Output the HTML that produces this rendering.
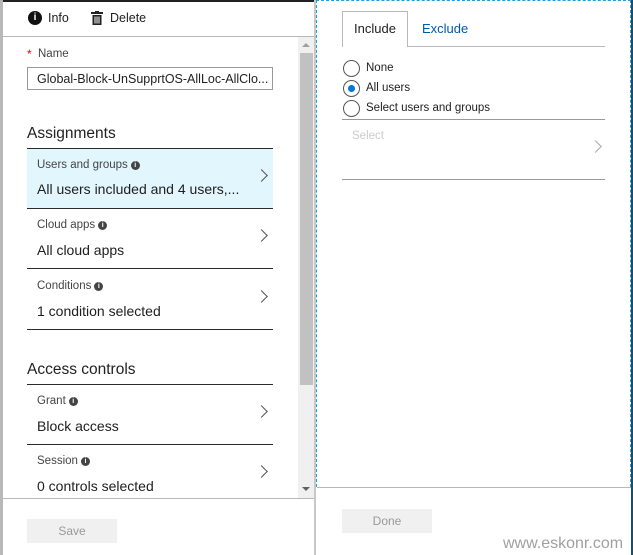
<!DOCTYPE html>
<html><head><style>
*{margin:0;padding:0;box-sizing:border-box}
body{width:633px;height:555px;position:relative;background:#fff;font-family:"Liberation Sans",sans-serif;color:#1e1e1e;overflow:hidden}
.a{position:absolute;white-space:nowrap}
.line{position:absolute;height:1px;background:#2a2a2a}
.lab{font-size:11.5px;color:#444}
.val{font-size:14px;color:#1e1e1e}
.i{display:inline-block;width:9px;height:9px;border-radius:50%;background:#444;color:#fff;font-size:7px;line-height:9px;text-align:center;font-weight:bold;vertical-align:1px;margin-left:3px}
.chev{position:absolute;width:9px;height:9px;border-right:1.3px solid #555;border-top:1.3px solid #555;transform:rotate(45deg)}
.radio{position:absolute;width:17px;height:17px;border:1.3px solid #555;border-radius:50%;background:#fff}
</style></head><body>
<div class="a" style="left:0;top:0;width:316px;height:2px;background:#222"></div>
<div class="a" style="left:0;top:0;width:3px;height:555px;background:#b8b8b8"></div>
<div class="a" style="left:3px;top:36px;width:313px;height:1px;background:#b8b8b8"></div>
<div class="a" style="left:28px;top:11px;width:14px;height:14px;border-radius:50%;background:#111;color:#fff;font-size:10px;line-height:14px;text-align:center;font-weight:bold">i</div>
<div class="a" style="left:48px;top:11px;font-size:12.5px">Info</div>
<svg class="a" style="left:91px;top:11px" width="12" height="14" viewBox="0 0 12 14"><rect x="0" y="1" width="12" height="2" fill="#222"/><rect x="4" y="0" width="4" height="1.5" fill="#222"/><rect x="1.5" y="4" width="9" height="10" fill="#222"/><rect x="3.5" y="5.5" width="1" height="7" fill="#fff"/><rect x="5.5" y="5.5" width="1" height="7" fill="#fff"/><rect x="7.5" y="5.5" width="1" height="7" fill="#fff"/></svg>
<div class="a" style="left:110px;top:11px;font-size:12.5px">Delete</div>
<div class="a" style="left:298px;top:37px;width:16px;height:461px;background:#f0f0f0"></div>
<div class="a" style="left:300px;top:53px;width:13px;height:332px;background:#c1c1c1"></div>
<div class="a" style="left:302px;top:43px;width:0;height:0;border-left:4px solid transparent;border-right:4px solid transparent;border-bottom:4px solid #a0a0a0"></div>
<div class="a" style="left:302px;top:487px;width:0;height:0;border-left:4px solid transparent;border-right:4px solid transparent;border-top:4px solid #606060"></div>
<div class="a" style="left:27px;top:47px;font-size:12px;color:#e00">*</div>
<div class="a lab" style="left:38px;top:48px">Name</div>
<div class="a" style="left:27px;top:67px;width:246px;height:23px;border:1px solid #999;font-size:12.5px;padding:4px 0 0 9px;color:#222">Global-Block-UnSupprtOS-AllLoc-AllClo...</div>
<div class="a" style="left:27px;top:125px;font-size:15.5px;color:#222">Assignments</div>
<div class="a" style="left:27px;top:149px;width:246px;height:59px;background:#e2f6fd"></div>
<div class="line" style="left:27px;top:148px;width:246px"></div>
<div class="a lab" style="left:37px;top:159px">Users and groups<span class="i">i</span></div>
<div class="a val" style="left:37px;top:181px">All users included and 4 users,...</div>
<div class="chev" style="left:257px;top:171px"></div>
<div class="line" style="left:27px;top:208px;width:246px"></div>
<div class="a lab" style="left:37px;top:219px">Cloud apps<span class="i">i</span></div>
<div class="a val" style="left:37px;top:242px">All cloud apps</div>
<div class="chev" style="left:257px;top:231px"></div>
<div class="line" style="left:27px;top:268px;width:246px"></div>
<div class="a lab" style="left:37px;top:280px">Conditions<span class="i">i</span></div>
<div class="a val" style="left:37px;top:303px">1 condition selected</div>
<div class="chev" style="left:257px;top:292px"></div>
<div class="line" style="left:27px;top:329px;width:246px"></div>
<div class="a" style="left:27px;top:361px;font-size:15.5px;color:#222">Access controls</div>
<div class="line" style="left:27px;top:384px;width:246px"></div>
<div class="a lab" style="left:37px;top:395px">Grant<span class="i">i</span></div>
<div class="a val" style="left:37px;top:418px">Block access</div>
<div class="chev" style="left:257px;top:407px"></div>
<div class="line" style="left:27px;top:444px;width:246px"></div>
<div class="a lab" style="left:37px;top:455px">Session<span class="i">i</span></div>
<div class="a val" style="left:37px;top:478px">0 controls selected</div>
<div class="chev" style="left:257px;top:467px"></div>
<div class="a" style="left:3px;top:498px;width:313px;height:1px;background:#b8b8b8"></div>
<div class="a" style="left:27px;top:519px;width:90px;height:24px;background:#f0f0f0;color:#999;font-size:12px;text-align:center;line-height:24px">Save</div>
<div class="a" style="left:314px;top:0;width:2px;height:555px;background:#c8c8c8"></div>
<div class="a" style="left:316px;top:0;width:1px;height:487px;border-left:1px dashed #1ba1e2"></div>
<div class="a" style="left:316px;top:0;width:315px;height:1px;border-top:1px dashed #1ba1e2"></div>
<div class="a" style="left:630px;top:0;width:1px;height:487px;border-left:1px dashed #1ba1e2"></div>
<div class="a" style="left:631px;top:0;width:2px;height:555px;background:#1e4d6b"></div>
<div class="a" style="left:342px;top:11px;width:66px;height:36px;border:1px solid #b8b8b8;border-bottom:none;background:#fff;font-size:13px;text-align:center;line-height:34px;color:#222">Include</div>
<div class="a" style="left:408px;top:46px;width:197px;height:1px;background:#b8b8b8"></div>
<div class="a" style="left:422px;top:21px;font-size:13px;color:#0058ad">Exclude</div>
<div class="radio" style="left:343px;top:60px"></div>
<div class="a" style="left:366px;top:62px;font-size:11.5px">None</div>
<div class="radio" style="left:343px;top:80px"></div>
<div class="a" style="left:348px;top:85px;width:7px;height:7px;border-radius:50%;background:#0078d7"></div>
<div class="a" style="left:366px;top:82px;font-size:11.5px">All users</div>
<div class="radio" style="left:343px;top:100px"></div>
<div class="a" style="left:366px;top:102px;font-size:11.5px">Select users and groups</div>
<div class="a" style="left:342px;top:119px;width:263px;height:1px;background:#999"></div>
<div class="a" style="left:352px;top:130px;font-size:11.5px;color:#ccc">Select</div>
<div class="chev" style="left:591px;top:142px;border-color:#aaa"></div>
<div class="a" style="left:342px;top:179px;width:263px;height:1px;background:#999"></div>
<div class="a" style="left:317px;top:487px;width:314px;height:1px;background:#b8b8b8"></div>
<div class="a" style="left:342px;top:509px;width:90px;height:24px;background:#f0f0f0;color:#999;font-size:12px;text-align:center;line-height:24px">Done</div>
<div class="a" style="left:503px;top:535px;font-size:16px;color:#a0a0a0">www.eskonr.com</div>
</body></html>
